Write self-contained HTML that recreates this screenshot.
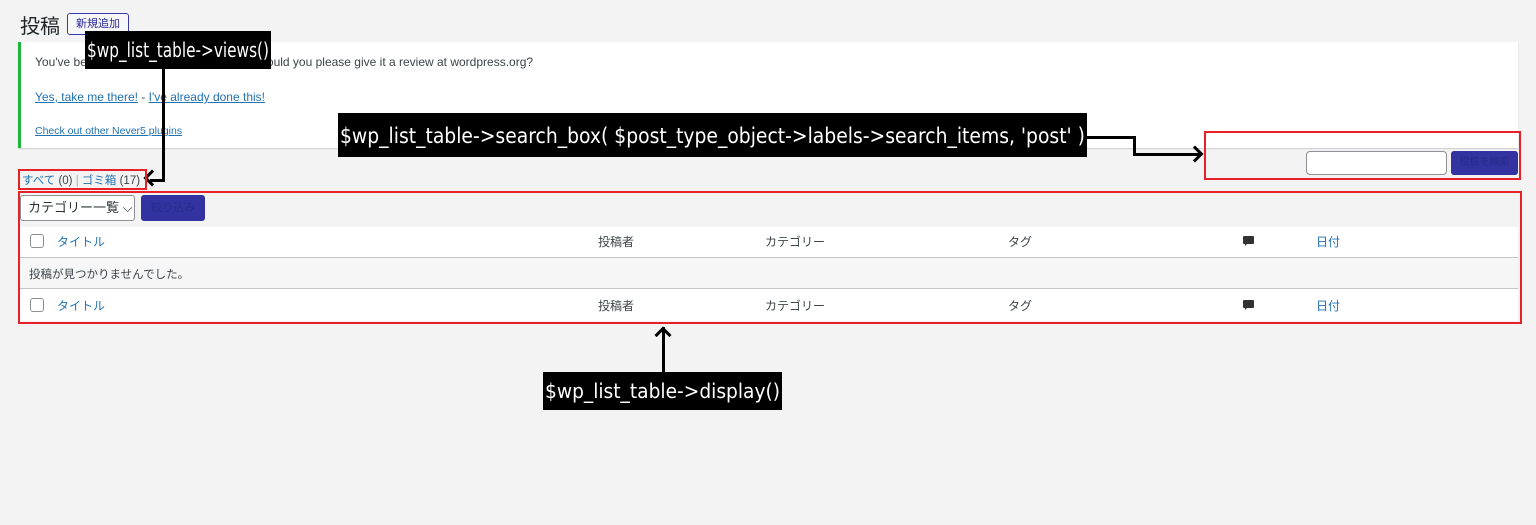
<!DOCTYPE html>
<html><head><meta charset="utf-8"><style>
*{margin:0;padding:0;box-sizing:border-box}
body{width:1536px;height:525px;background:#f3f3f3;position:relative;overflow:hidden;font-family:"Liberation Sans","Noto Sans CJK JP",sans-serif;color:#3c434a}
.a{position:absolute;white-space:nowrap}
.lbl{position:absolute;background:#000;display:block}
.lbl text{fill:#fff;font-family:"DejaVu Sans","Noto Sans CJK JP",sans-serif}
.link{color:#2271b1}
.red{position:absolute;border:2px solid #e8202a}
.cb{position:absolute;width:14px;height:14px;border:1px solid #8c8f94;border-radius:3px;background:#fff}
.t{font-size:12px}
.ic{position:absolute;width:11px;height:8px;background:#333;border-radius:1px}
.ic:after{content:"";position:absolute;left:2px;top:7px;border-left:3px solid #333;border-bottom:3px solid transparent}
.ln{position:absolute;background:#000}
</style></head><body>
<div class="a" style="left:20px;top:10px;font-size:20px;color:#1d2327">投稿</div>
<div class="a" style="left:67px;top:13px;width:62px;height:22px;border:1px solid #3a3ab0;border-radius:3px;font-size:11px;color:#2a2a9c;text-align:center;line-height:20px;background:#f6f7f7">新規追加</div>

<div class="a" style="left:18px;top:42px;width:1500px;height:106px;background:#fff;border-left:3px solid #1fb53a;box-shadow:0 1px 1px #ccc"></div>
<div class="a" style="left:35px;top:55px;font-size:12px">You've be<span style="display:inline-block;width:180px"></span>ould you please give it a review at wordpress.org?</div>
<div class="a" style="left:35px;top:90px;font-size:12px"><span class="link" style="text-decoration:underline">Yes, take me there!</span> - <span class="link" style="text-decoration:underline">I've already done this!</span></div>
<div class="a link" style="left:35px;top:125px;font-size:10.5px;text-decoration:underline">Check out other Never5 plugins</div>

<svg class="lbl" style="left:85px;top:31px" width="186" height="38"><text x="2" y="26" font-size="20" textLength="182" lengthAdjust="spacingAndGlyphs">$wp_list_table-&gt;views()</text></svg>
<div class="ln" style="left:162px;top:69px;width:3px;height:113px"></div>
<div class="ln" style="left:150px;top:179px;width:15px;height:3px"></div>
<div class="a" style="left:146px;top:172px;width:12px;height:12px;border-left:3px solid #000;border-bottom:3px solid #000;transform:rotate(45deg)"></div>

<div class="red" style="left:18px;top:169px;width:129px;height:21px"></div>
<div class="a" style="left:22px;top:172px;font-size:11.5px"><span class="link">すべて</span> (0) <span style="color:#aaa">|</span> <span class="link">ゴミ箱</span> (17)</div>

<svg class="lbl" style="left:338px;top:113px" width="749" height="44"><text x="2" y="30" font-size="21" textLength="745" lengthAdjust="spacingAndGlyphs">$wp_list_table-&gt;search_box( $post_type_object-&gt;labels-&gt;search_items, 'post' )</text></svg>
<div class="ln" style="left:1087px;top:136px;width:48px;height:3px"></div>
<div class="ln" style="left:1133px;top:136px;width:3px;height:20px"></div>
<div class="ln" style="left:1133px;top:153px;width:66px;height:3px"></div>
<div class="a" style="left:1189px;top:148px;width:12px;height:12px;border-right:3px solid #000;border-top:3px solid #000;transform:rotate(45deg)"></div>

<div class="red" style="left:1204px;top:131px;width:317px;height:49px"></div>
<div class="a" style="left:1306px;top:151px;width:141px;height:24px;background:#fff;border:1px solid #8c8f94;border-radius:4px"></div>
<div class="a" style="left:1451px;top:151px;width:67px;height:24px;background:#3232a0;border-radius:3px;font-size:10px;color:#2a2a8c;text-align:center;line-height:24px">投稿を検索</div>

<div class="a" style="left:18px;top:227px;width:1500px;height:31px;background:#fff;border-bottom:1px solid #c3c4c7"></div>
<div class="a" style="left:18px;top:258px;width:1500px;height:31px;background:#f6f6f6;border-bottom:1px solid #c3c4c7"></div>
<div class="a" style="left:18px;top:289px;width:1500px;height:32px;background:#fff"></div>
<div class="red" style="left:18px;top:191px;width:1504px;height:133px"></div>

<div class="a" style="left:20px;top:195px;width:115px;height:26px;background:#fff;border:1px solid #8c8f94;border-radius:3px;font-size:13px;line-height:24px;padding-left:7px;color:#2c3338">カテゴリー一覧 ⌵</div>
<div class="a" style="left:141px;top:195px;width:64px;height:26px;background:#3232a0;border-radius:3px;font-size:11px;color:#2a2a8c;text-align:center;line-height:26px">絞り込み</div>

<div class="cb" style="left:30px;top:234px"></div>
<div class="a t link" style="left:57px;top:233px">タイトル</div>
<div class="a t" style="left:598px;top:233px">投稿者</div>
<div class="a t" style="left:765px;top:233px">カテゴリー</div>
<div class="a t" style="left:1008px;top:233px">タグ</div>
<div class="ic" style="left:1243px;top:236px"></div>
<div class="a t link" style="left:1316px;top:233px">日付</div>

<div class="a" style="left:29px;top:266px;font-size:11.5px">投稿が見つかりませんでした。</div>

<div class="cb" style="left:30px;top:298px"></div>
<div class="a t link" style="left:57px;top:297px">タイトル</div>
<div class="a t" style="left:598px;top:297px">投稿者</div>
<div class="a t" style="left:765px;top:297px">カテゴリー</div>
<div class="a t" style="left:1008px;top:297px">タグ</div>
<div class="ic" style="left:1243px;top:300px"></div>
<div class="a t link" style="left:1316px;top:297px">日付</div>

<div class="ln" style="left:662px;top:327px;width:3px;height:46px"></div>
<div class="a" style="left:657px;top:329px;width:12px;height:12px;border-left:3px solid #000;border-top:3px solid #000;transform:rotate(45deg)"></div>
<svg class="lbl" style="left:543px;top:372px" width="239" height="38"><text x="2" y="26" font-size="20" textLength="235" lengthAdjust="spacingAndGlyphs">$wp_list_table-&gt;display()</text></svg>
</body></html>
